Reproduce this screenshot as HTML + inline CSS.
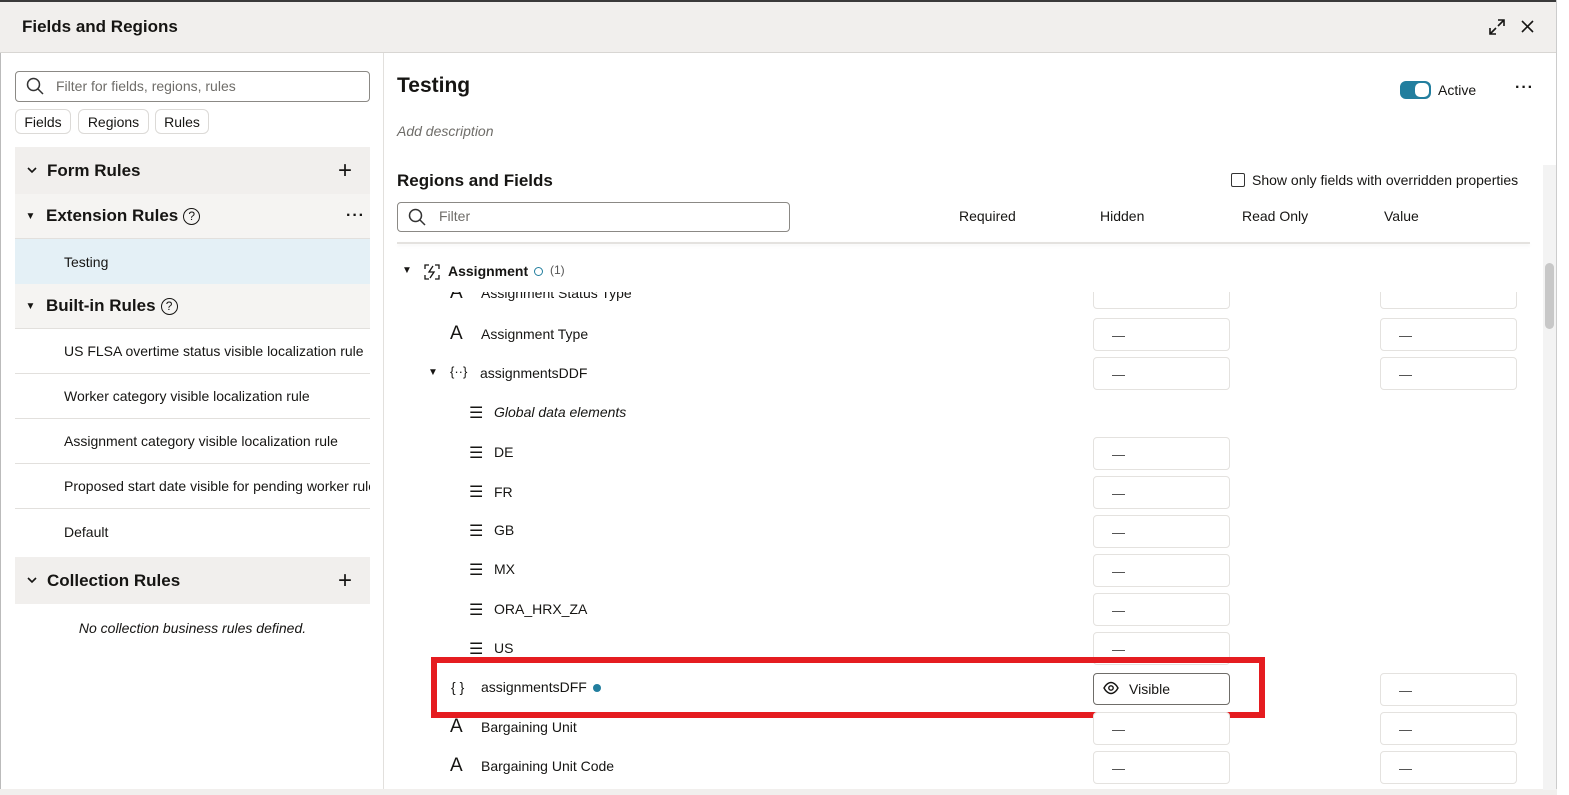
<!DOCTYPE html>
<html><head><meta charset="utf-8"><style>
*{box-sizing:border-box;margin:0;padding:0}
body{width:1569px;height:795px;overflow:hidden;background:#fff;font-family:"Liberation Sans",sans-serif;color:#161513;position:relative;font-size:14px}
.a{position:absolute}
.hdr{left:0;top:0;width:1557px;height:53px;background:#f1efed;border-top:2px solid #3a3a3a;border-bottom:1px solid #d8d6d3}
.t{white-space:nowrap}
.sec{left:15px;width:355px;height:45px;display:flex;align-items:center;font-weight:bold;font-size:17px}
.item{left:15px;width:355px;height:45px;border-bottom:1px solid #e2e0dd;padding-left:49px;display:flex;align-items:center;font-size:14px;white-space:nowrap;overflow:hidden}
.chip{top:109px;height:25px;border:1px solid #dcdad7;border-radius:6px;font-size:14px;display:flex;align-items:center;justify-content:center}
.box{width:137px;height:33px;border:1px solid #e4e2df;border-radius:4px;background:#fff}
.box i{position:absolute;left:18px;top:17px;width:13px;border-top:1px solid #555}
.lbl{font-size:14px;white-space:nowrap}
.q{display:inline-block;width:17px;height:17px;border:1.5px solid #161513;border-radius:50%;font-size:12px;text-align:center;line-height:14px;margin-left:5px;font-weight:normal}
</style></head><body>
<div class="a hdr"></div>
<div class="a t" style="left:22px;top:17px;font-weight:bold;font-size:17px">Fields and Regions</div>
<svg class="a" style="left:1488px;top:18px" width="18" height="18" viewBox="0 0 18 18" fill="none" stroke="#161513" stroke-width="1.6"><path d="M10 2h6v6M16 2l-6 6M8 16H2v-6M2 16l6-6"/></svg>
<svg class="a" style="left:1521px;top:20px" width="13" height="13" viewBox="0 0 13 13" stroke="#161513" stroke-width="1.6"><path d="M1 1l11 11M12 1L1 12"/></svg>
<div class="a" style="left:0;top:53px;width:1px;height:742px;background:#bbb"></div>
<div class="a" style="left:383px;top:53px;width:1px;height:742px;background:#e2e0dd"></div>
<div class="a" style="left:1556px;top:0;width:1px;height:795px;background:#ccc"></div>
<div class="a" style="left:0;top:789px;width:1557px;height:6px;background:#f1efed"></div>

<!-- left -->
<div class="a" style="left:15px;top:71px;width:355px;height:31px;border:1px solid #8b8985;border-radius:4px"></div>
<svg class="a" style="left:26px;top:77px" width="18" height="18" viewBox="0 0 18 18" fill="none" stroke="#333" stroke-width="1.5"><circle cx="7.5" cy="7.5" r="6"/><path d="M12 12l5 5"/></svg>
<div class="a t" style="left:56px;top:78px;color:#6f6d69;font-size:14px">Filter for fields, regions, rules</div>
<div class="a chip" style="left:15px;width:56px">Fields</div>
<div class="a chip" style="left:78px;width:71px">Regions</div>
<div class="a chip" style="left:155px;width:54px">Rules</div>

<div class="a sec" style="top:147px;height:47px;background:#f1efed"><svg style="margin:0 10px 0 12px" width="10" height="7" viewBox="0 0 10 7" fill="none" stroke="#161513" stroke-width="1.6"><path d="M1 1l4 4 4-4"/></svg>Form Rules<span style="position:absolute;right:18px;font-weight:normal;font-size:24px">+</span></div>
<div class="a sec" style="top:194px;background:#f5f4f2;border-bottom:1px solid #e2e0dd"><span style="width:31px;text-align:center;font-size:10px">&#9660;</span>Extension Rules<span class="q">?</span><span style="position:absolute;right:5px;font-size:16px;letter-spacing:1px">&middot;&middot;&middot;</span></div>
<div class="a item" style="top:239px;background:#e4f0f6;border:none">Testing</div>
<div class="a sec" style="top:284px;background:#f5f4f2;border-bottom:1px solid #e2e0dd"><span style="width:31px;text-align:center;font-size:10px">&#9660;</span>Built-in Rules<span class="q">?</span></div>
<div class="a item" style="top:329px">US FLSA overtime status visible localization rule</div>
<div class="a item" style="top:374px">Worker category visible localization rule</div>
<div class="a item" style="top:419px">Assignment category visible localization rule</div>
<div class="a item" style="top:464px">Proposed start date visible for pending worker rule</div>
<div class="a item" style="top:509px;border:none">Default</div>
<div class="a sec" style="top:557px;height:47px;background:#f1efed"><svg style="margin:0 10px 0 12px" width="10" height="7" viewBox="0 0 10 7" fill="none" stroke="#161513" stroke-width="1.6"><path d="M1 1l4 4 4-4"/></svg>Collection Rules<span style="position:absolute;right:18px;font-weight:normal;font-size:24px">+</span></div>
<div class="a t" style="left:15px;width:355px;top:620px;text-align:center;font-style:italic">No collection business rules defined.</div>

<!-- right -->
<div class="a t" style="left:397px;top:74px;font-weight:bold;font-size:21px">Testing</div>
<div class="a t" style="left:397px;top:123px;font-style:italic;color:#6f6d69">Add description</div>
<div class="a" style="left:1400px;top:81px;width:31px;height:18px;border-radius:6px;background:#227e9e"><div style="position:absolute;right:2px;top:2px;width:14px;height:14px;border-radius:5px;background:#fff"></div></div>
<div class="a t" style="left:1438px;top:82px">Active</div>
<div class="a t" style="left:1515px;top:79px;font-size:16px;letter-spacing:1px;font-weight:bold">&middot;&middot;&middot;</div>
<div class="a t" style="left:397px;top:171px;font-weight:bold;font-size:17px">Regions and Fields</div>
<div class="a" style="left:1231px;top:173px;width:14px;height:14px;border:1px solid #333;border-radius:2px"></div>
<div class="a t" style="left:1252px;top:172px">Show only fields with overridden properties</div>
<div class="a" style="left:397px;top:202px;width:393px;height:30px;border:1px solid #8b8985;border-radius:4px"></div>
<svg class="a" style="left:408px;top:208px" width="18" height="18" viewBox="0 0 18 18" fill="none" stroke="#333" stroke-width="1.5"><circle cx="7.5" cy="7.5" r="6"/><path d="M12 12l5 5"/></svg>
<div class="a t" style="left:439px;top:208px;color:#6f6d69">Filter</div>
<div class="a t" style="left:959px;top:208px">Required</div>
<div class="a t" style="left:1100px;top:208px">Hidden</div>
<div class="a t" style="left:1242px;top:208px">Read Only</div>
<div class="a t" style="left:1384px;top:208px">Value</div>
<div class="a" style="left:397px;top:242px;width:1133px;height:2px;background:#e4e2df;box-shadow:0 2px 3px rgba(0,0,0,.05)"></div>
<div class="a" style="left:1543px;top:165px;width:13px;height:625px;background:#f3f3f3"></div>
<div class="a" style="left:1545px;top:263px;width:9px;height:66px;border-radius:5px;background:#c8c8c8"></div>

<div class="a t" style="left:402px;top:265px;font-size:10px">&#9660;</div>
<svg class="a" style="left:424px;top:264px" width="16" height="16" viewBox="0 0 16 16" fill="none" stroke="#161513" stroke-width="1.3"><path d="M1 5V1h4M11 1h4v4M15 11v4h-4M5 15H1v-4M9 2L5 8h5l-4 6"/></svg>
<div class="a t" style="left:448px;top:263px;font-weight:bold">Assignment</div>
<div class="a" style="left:534px;top:267px;width:9px;height:9px;border:1px solid #227e9e;border-radius:50%"></div>
<div class="a t" style="left:550px;top:263px;font-size:12px;color:#555">(1)</div>

<div class="a" style="left:384px;top:292px;width:1158px;height:30px;overflow:hidden">
  <div class="a box" style="left:709px;top:-16px"></div><div class="a box" style="left:996px;top:-16px"></div>
  <div class="a t" style="left:66px;top:-10px;font-size:19px">A</div><div class="a lbl" style="left:97px;top:-7px">Assignment Status Type</div>
</div>
<div class="a t" style="left:450px;top:323px;font-size:19px">A</div><div class="a lbl" style="left:481px;top:326px">Assignment Type</div>
<div class="a box" style="left:1093px;top:318px"><i></i></div><div class="a box" style="left:1380px;top:318px"><i></i></div>
<div class="a t" style="left:428px;top:367px;font-size:10px">&#9660;</div>
<div class="a t" style="left:450px;top:364px;font-size:13px">{&middot;&middot;}</div><div class="a lbl" style="left:480px;top:365px">assignmentsDDF</div>
<div class="a box" style="left:1093px;top:357px"><i></i></div><div class="a box" style="left:1380px;top:357px"><i></i></div>
<div class="a t" style="left:469px;top:403px;font-size:16px">&#9776;</div><div class="a lbl" style="left:494px;top:404px;font-style:italic">Global data elements</div>

<div class="a t" style="left:469px;top:443px;font-size:16px">&#9776;</div><div class="a lbl" style="left:494px;top:444px">DE</div><div class="a box" style="left:1093px;top:437px"><i></i></div>
<div class="a t" style="left:469px;top:482px;font-size:16px">&#9776;</div><div class="a lbl" style="left:494px;top:484px">FR</div><div class="a box" style="left:1093px;top:476px"><i></i></div>
<div class="a t" style="left:469px;top:521px;font-size:16px">&#9776;</div><div class="a lbl" style="left:494px;top:522px">GB</div><div class="a box" style="left:1093px;top:515px"><i></i></div>
<div class="a t" style="left:469px;top:560px;font-size:16px">&#9776;</div><div class="a lbl" style="left:494px;top:561px">MX</div><div class="a box" style="left:1093px;top:554px"><i></i></div>
<div class="a t" style="left:469px;top:600px;font-size:16px">&#9776;</div><div class="a lbl" style="left:494px;top:601px">ORA_HRX_ZA</div><div class="a box" style="left:1093px;top:593px"><i></i></div>
<div class="a t" style="left:469px;top:639px;font-size:16px">&#9776;</div><div class="a lbl" style="left:494px;top:640px">US</div><div class="a box" style="left:1093px;top:632px"><i></i></div>

<div class="a" style="left:431px;top:657px;width:834px;height:61px;border:6px solid #e51c20"></div>
<div class="a t" style="left:451px;top:679px">{ }</div><div class="a lbl" style="left:481px;top:679px">assignmentsDFF</div>
<div class="a" style="left:593px;top:684px;width:8px;height:8px;border-radius:50%;background:#227e9e"></div>
<div class="a" style="left:1093px;top:673px;width:137px;height:32px;border:1px solid #6f6d69;border-radius:4px"></div>
<svg class="a" style="left:1103px;top:681px" width="16" height="14" viewBox="0 0 16 14" fill="none" stroke="#161513" stroke-width="1.4"><path d="M1 7c2-4 5-5.5 7-5.5S13 3 15 7c-2 4-5 5.5-7 5.5S3 11 1 7z"/><circle cx="8" cy="7" r="2.2"/></svg>
<div class="a lbl" style="left:1129px;top:681px">Visible</div>
<div class="a box" style="left:1380px;top:673px"><i></i></div>

<div class="a t" style="left:450px;top:716px;font-size:19px">A</div><div class="a lbl" style="left:481px;top:719px">Bargaining Unit</div>
<div class="a box" style="left:1093px;top:712px"><i></i></div><div class="a box" style="left:1380px;top:712px"><i></i></div>
<div class="a t" style="left:450px;top:755px;font-size:19px">A</div><div class="a lbl" style="left:481px;top:758px">Bargaining Unit Code</div>
<div class="a box" style="left:1093px;top:751px"><i></i></div><div class="a box" style="left:1380px;top:751px"><i></i></div>
</body></html>
